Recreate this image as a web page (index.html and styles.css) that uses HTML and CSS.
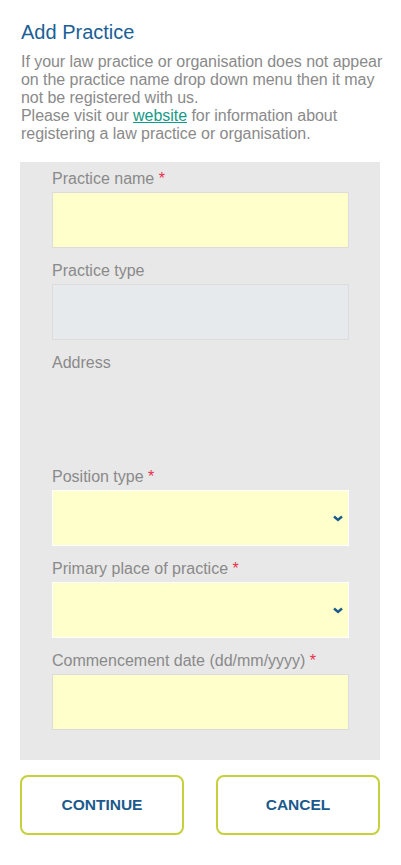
FILE: index.html
```html
<!DOCTYPE html>
<html lang="en">
<head>
<meta charset="utf-8">
<title>Add Practice</title>
<link rel="stylesheet" href="styles.css">
</head>
<body>
<div class="page">
  <h1 class="title">Add Practice</h1>
  <p class="intro">If your law practice or organisation does not appear on the practice name drop down menu then it may not be registered with us.<br>Please visit our <a href="#" class="link">website</a> for information about registering a law practice or organisation.</p>
  <div class="panel">
    <div class="field">
      <div class="label">Practice name <span class="req">*</span></div>
      <div class="input"></div>
    </div>
    <div class="field">
      <div class="label">Practice type</div>
      <div class="input input-disabled"></div>
    </div>
    <div class="field">
      <div class="label">Address</div>
      <div class="address"></div>
    </div>
    <div class="field">
      <div class="label">Position type <span class="req">*</span></div>
      <div class="select">
        <svg class="chev" width="10" height="7" viewBox="0 0 10 7"><polyline points="1,1.5 5,5 9,1.5" fill="none" stroke="#1a5a8c" stroke-width="2.4"/></svg>
      </div>
    </div>
    <div class="field">
      <div class="label">Primary place of practice <span class="req">*</span></div>
      <div class="select">
        <svg class="chev" width="10" height="7" viewBox="0 0 10 7"><polyline points="1,1.5 5,5 9,1.5" fill="none" stroke="#1a5a8c" stroke-width="2.4"/></svg>
      </div>
    </div>
    <div class="field last">
      <div class="label">Commencement date (dd/mm/yyyy) <span class="req">*</span></div>
      <div class="input"></div>
    </div>
  </div>
  <div class="buttons">
    <button class="btn">CONTINUE</button>
    <button class="btn">CANCEL</button>
  </div>
</div>
</body>
</html>
```
FILE: styles.css
```css
html, body {
  margin: 0;
  padding: 0;
  background: #ffffff;
}
body {
  font-family: "Liberation Sans", Arial, sans-serif;
}
.page {
  width: 360px;
  margin-left: 20px;
  padding-top: 21px;
}
.title {
  margin: 0 0 9px 1px;
  font-size: 20px;
  line-height: 23px;
  font-weight: normal;
  color: #1b5f95;
}
.intro {
  margin: 0 -4px 19px 1px;
  font-size: 16px;
  line-height: 18px;
  color: #8a8a8a;
  letter-spacing: -0.05px;
}
.link {
  display: inline-block;
  line-height: 18px;
  color: #169a86;
  text-decoration: underline;
}
.panel {
  background: #e8e8e8;
  padding: 8px 31px 30px 32px;
}
.field {
  margin-bottom: 14px;
}
.field.last {
  margin-bottom: 0;
}
.label {
  font-size: 16px;
  line-height: 18px;
  color: #8a8a8a;
  margin-bottom: 4px;
}
.req {
  color: #e8304a;
}
.input {
  height: 54px;
  background: #ffffcc;
  border: 1px solid #dcdcdc;
}
.input-disabled {
  background: #e6eaed;
}
.address {
  height: 78px;
}
.select {
  height: 54px;
  background: #ffffcc;
  border: 1px solid #ffffff;
  display: flex;
  align-items: center;
  justify-content: flex-end;
  padding-right: 5px;
}
.chev {
  display: block;
}
.buttons {
  display: flex;
  justify-content: space-between;
  margin-top: 15px;
}
.btn {
  width: 164px;
  height: 60px;
  background: #ffffff;
  border: 2px solid #c6cf3c;
  border-radius: 8px;
  font-family: "Liberation Sans", Arial, sans-serif;
  font-weight: bold;
  font-size: 15.5px;
  color: #1a5a8c;
  padding: 0;
  cursor: pointer;
}
```
